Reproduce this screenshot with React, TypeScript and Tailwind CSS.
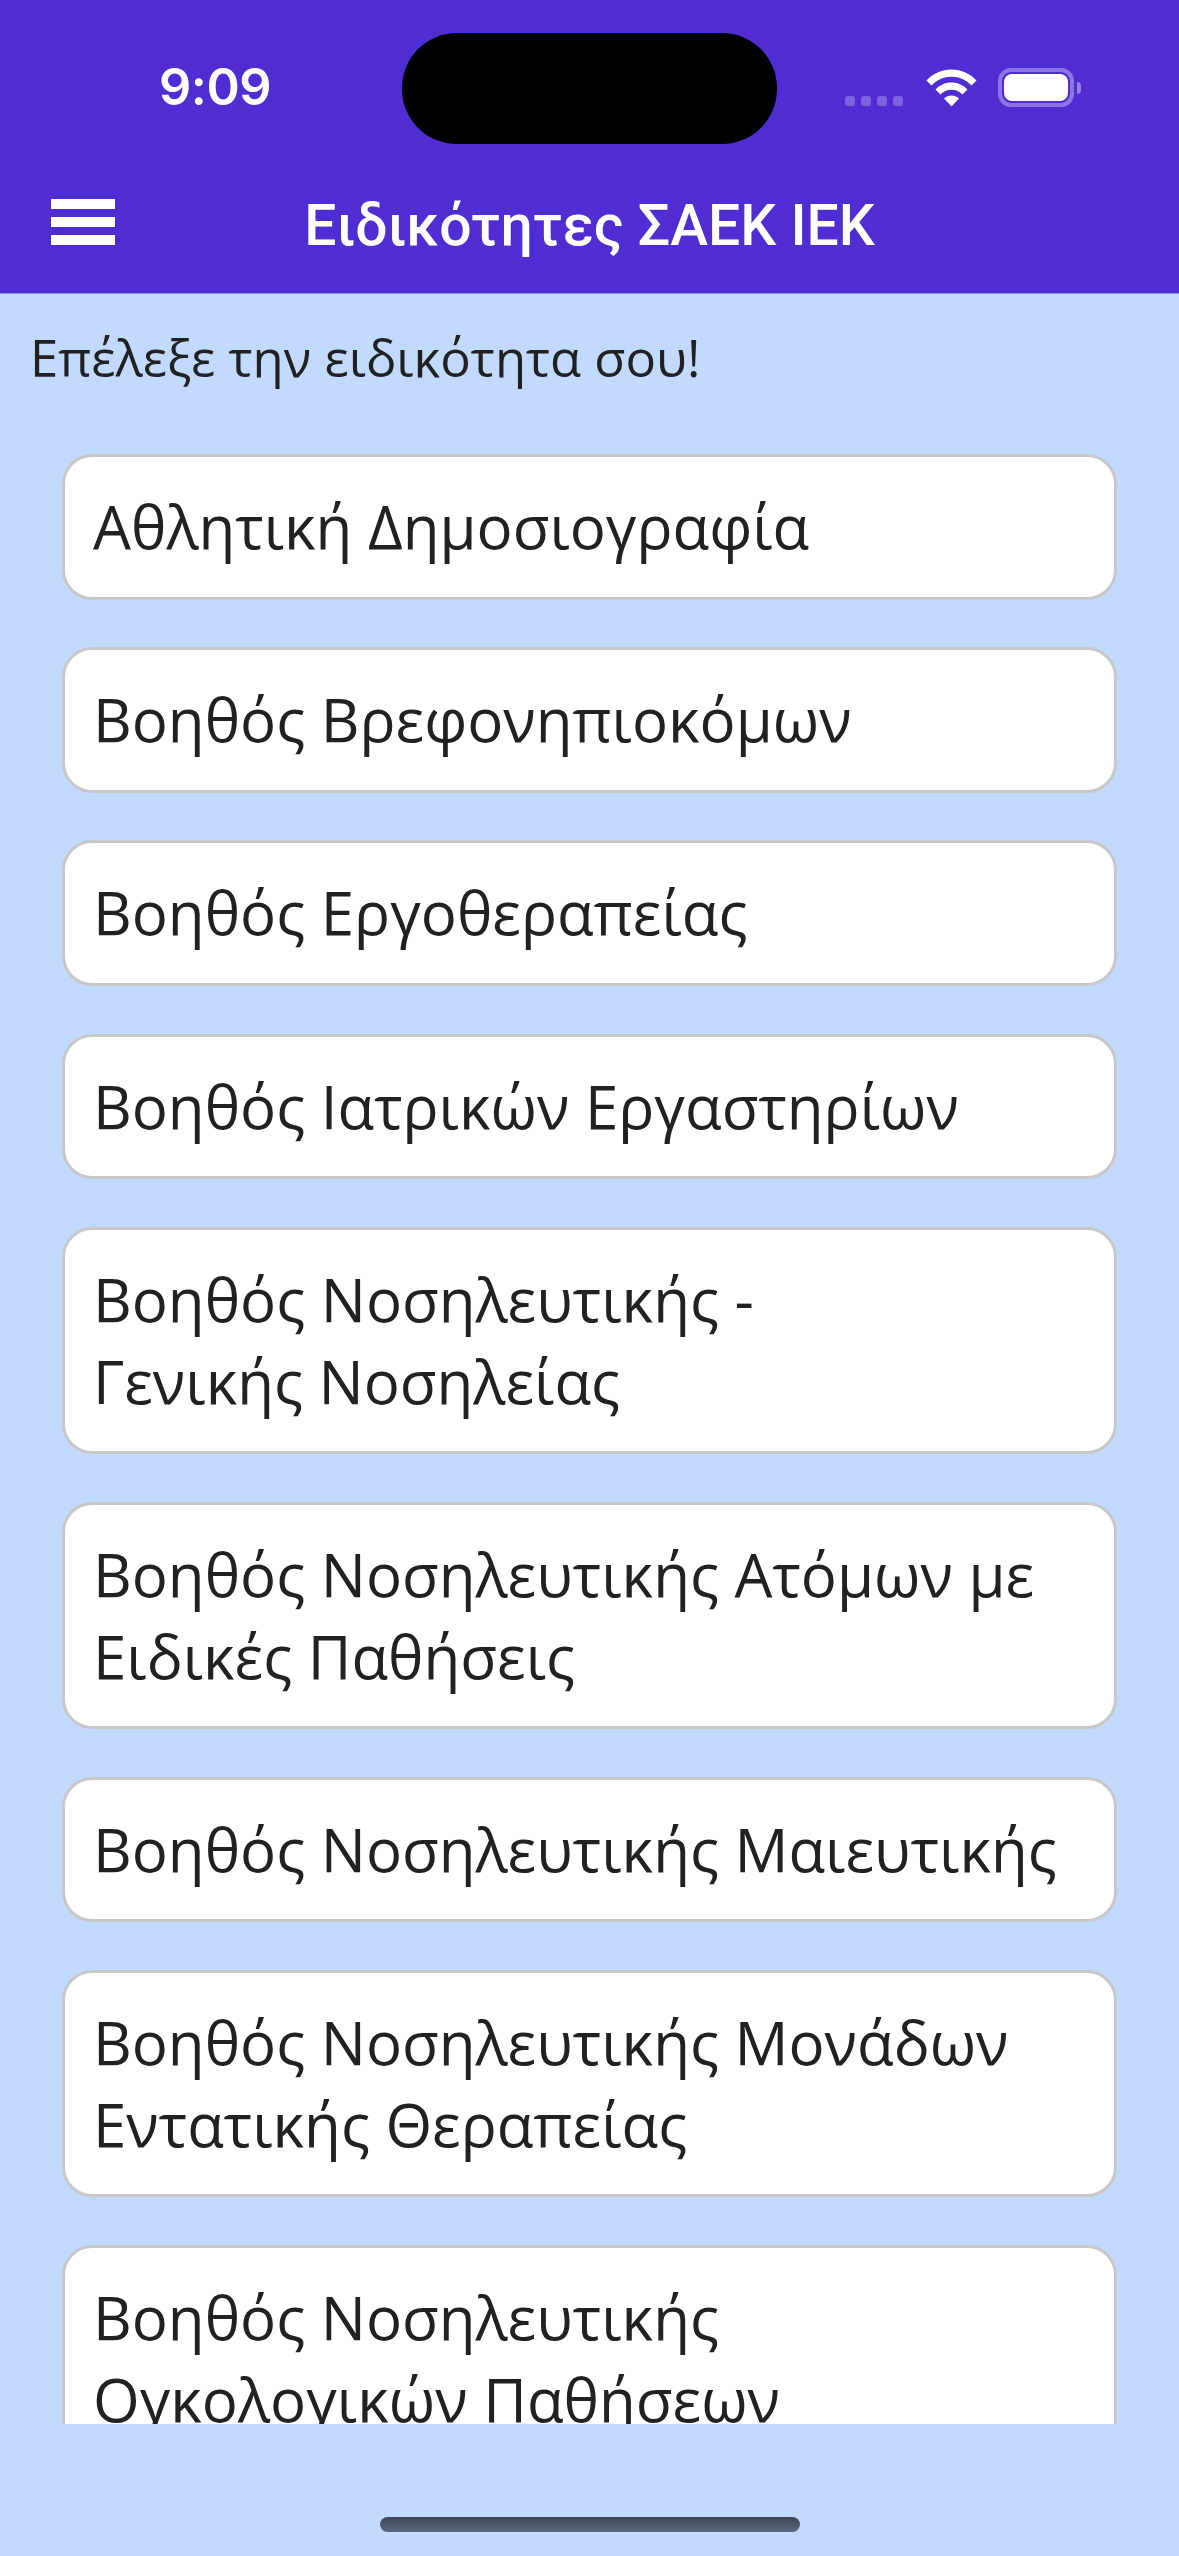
import React from 'react';

const specialties = [
  'Αθλητική Δημοσιογραφία',
  'Βοηθός Βρεφονηπιοκόμων',
  'Βοηθός Εργοθεραπείας',
  'Βοηθός Ιατρικών Εργαστηρίων',
  'Βοηθός Νοσηλευτικής - Γενικής\u00A0Νοσηλείας',
  'Βοηθός Νοσηλευτικής Ατόμων με Ειδικές Παθήσεις',
  'Βοηθός Νοσηλευτικής Μαιευτικής',
  'Βοηθός Νοσηλευτικής Μονάδων Εντατικής Θεραπείας',
  'Βοηθός Νοσηλευτικής Ογκολογικών Παθήσεων',
];

const Wifi = () => (
  <svg width="51" height="38" viewBox="0 0 51 38" fill="#fff">
    <path d="M0.5 11.5C7 4.5 15.5 0.5 25.5 0.5C35.5 0.5 44 4.5 50.5 11.5L45.5 16.5C40 11 33.5 7.8 25.5 7.8C17.5 7.8 11 11 5.5 16.5Z" />
    <path d="M9.5 20.5C13.5 16.2 19 13.5 25.5 13.5C32 13.5 37.5 16.2 41.5 20.5L36.5 25.5C33.5 22.5 30 20.8 25.5 20.8C21 20.8 17.5 22.5 14.5 25.5Z" />
    <path d="M18 29.5C20 27.5 22.5 26.5 25.5 26.5C28.5 26.5 31 27.5 33 29.5L25.5 37.5Z" />
  </svg>
);

const Battery = () => (
  <div className="flex items-center gap-[3px]">
    <div className="w-[76px] h-[39px] rounded-[13px] border-[4px] border-white/35 p-[2px]">
      <div className="w-full h-full rounded-[8px] bg-white" />
    </div>
    <div className="w-[4px] h-[12px] rounded-r-full bg-white/40" />
  </div>
);

export default function App() {
  return (
    <div className="relative w-[1179px] h-[2556px] overflow-hidden bg-[#c2daff] flex flex-col font-['Open_Sans','Noto_Sans',sans-serif] text-[#212121]">
      {/* header */}
      <div className="bg-[#502dd3] h-[294px] shrink-0 border-b border-[#8f8fd8] flex flex-col">
        <div className="h-[177px] shrink-0 pl-[159px] pr-[98px] pt-[55px] flex items-start justify-between">
          <span className="text-[50.5px] leading-[64px] font-semibold text-white font-['Inter',sans-serif] tracking-[-0.5px]">9:09</span>
          <div className="flex items-start mt-[13px]">
            <div className="flex gap-[6px] mt-[28px] mr-[23px]">
              <div className="w-[10px] h-[10px] rounded-[3px] bg-white/25" />
              <div className="w-[10px] h-[10px] rounded-[3px] bg-white/25" />
              <div className="w-[10px] h-[10px] rounded-[3px] bg-white/25" />
              <div className="w-[10px] h-[10px] rounded-[3px] bg-white/25" />
            </div>
            <div className="mt-[1px] mr-[21px]"><Wifi /></div>
            <Battery />
          </div>
        </div>
        <div className="flex items-start">
          <div className="ml-[51px] mt-[22px] flex flex-col gap-[8.5px]">
            <div className="w-[64px] h-[9.5px] bg-white" />
            <div className="w-[64px] h-[9.5px] bg-white" />
            <div className="w-[64px] h-[9.5px] bg-white" />
          </div>
          <h1 className="flex-1 mt-[15px] mr-[115px] text-center text-[57px] leading-[68px] font-medium text-white font-['Roboto',sans-serif]">Ειδικότητες ΣΑΕΚ ΙΕΚ</h1>
        </div>
      </div>
      <div className="absolute left-[402px] top-[33px] w-[375px] h-[111px] rounded-[55px] bg-black" />

      {/* content */}
      <p className="shrink-0 pl-[30px] pt-[29px] text-[50.8px] leading-[70px]">Επέλεξε την ειδικότητα σου!</p>
      <div className="mt-[61px] h-[1970px] overflow-hidden px-[62px] flex flex-col gap-[47.5px]">
        {specialties.map((name) => (
          <button
            key={name}
            className="w-full shrink-0 text-left bg-white border-[3px] border-[#c8c8c8] rounded-[30px] pt-[29px] pb-[29px] pl-[28px] pr-[40px] text-[60px] leading-[81.72px]"
          >
            {name}
          </button>
        ))}
      </div>

      {/* home indicator */}
      <div className="mt-[93px] mx-auto w-[420px] h-[15px] rounded-full shrink-0 bg-gradient-to-b from-[#3f4654] to-[#5b6880]" />
    </div>
  );
}
